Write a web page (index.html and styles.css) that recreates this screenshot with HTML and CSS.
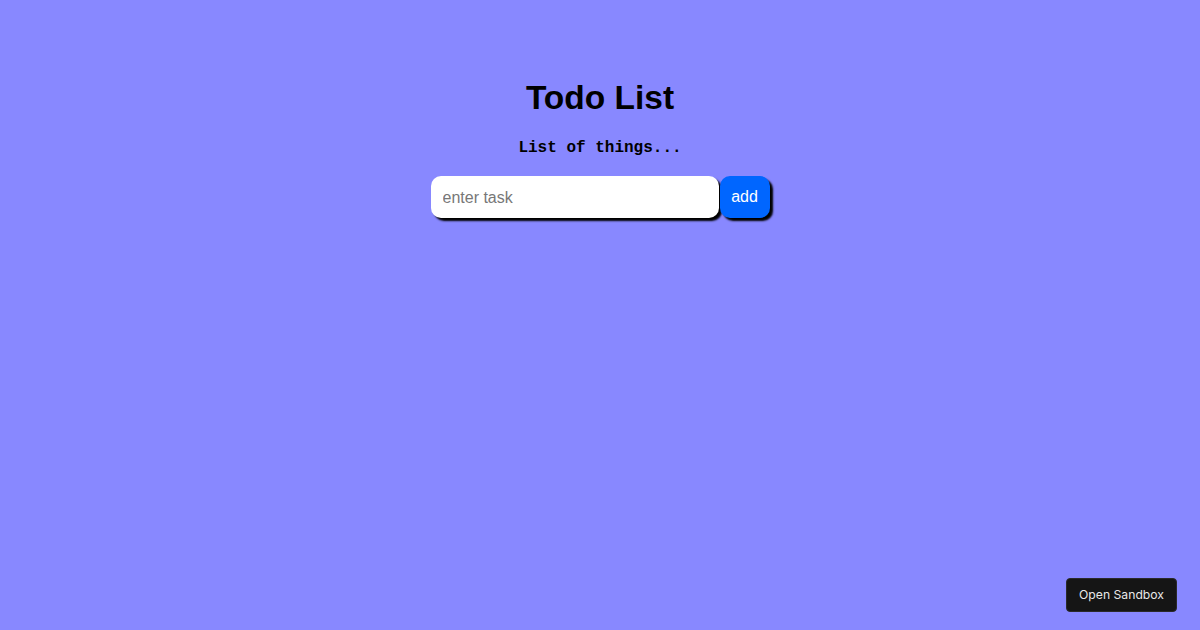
FILE: index.html
```html
<!DOCTYPE html>
<html lang="en">
<head>
  <meta charset="UTF-8">
  <meta name="viewport" content="width=device-width,initial-scale=1.0">
  <title>Todo List</title>
  <link rel="stylesheet" href="styles.css">
</head>
<body>
  <div class="app">
    <h1>Todo List</h1>
    <p class="subtitle">List of things...</p>
    <form class="todo-form">
      <input type="text" class="task-input" placeholder="enter task">
      <button type="submit" class="add-btn">add</button>
    </form>
    <ul class="todo-list"></ul>
  </div>

  <a class="sandbox-btn" href="#">Open Sandbox</a>
</body>
</html>
```

FILE: styles.css
```css
body { margin: 0; background: #8888ff; font-family: "Liberation Sans", Arial, sans-serif; min-height: 630px; }
.app { display: flex; flex-direction: column; align-items: center; padding-top: 77px; }
h1 { margin: 0; font-size: 33.5px; line-height: 42px; font-weight: bold; color: #000; }
.subtitle { margin: 19px 0 0; font-family: "Liberation Mono", "Courier New", monospace; font-weight: bold; font-size: 16px; line-height: 20px; }
.todo-form { display: flex; margin-top: 18px; }
.task-input {
  width: 288px; height: 42px; box-sizing: border-box; padding: 1px 12px 0;
  border: none; border-radius: 10px; background: #fff; outline: none;
  font-family: "Liberation Sans", Arial, sans-serif; font-size: 16px;
  box-shadow: 3px 3px 2px #000;
}
.task-input::placeholder { color: #777; }
.add-btn {
  width: 50px; height: 42px; margin-left: 1px; border: none; border-radius: 10px;
  background: #0066ff; color: #fff; font-family: "Liberation Sans", Arial, sans-serif; font-size: 16px;
  box-shadow: 3px 3px 2px #000; cursor: pointer;
}
.todo-list { list-style: none; padding: 0; margin: 0; }
.sandbox-btn {
  position: fixed; right: 23px; bottom: 18px; padding: 0 12px; height: 34px; line-height: 32px;
  background: #151515; color: #e8e8e8; border: 1px solid #2a2a2a; border-radius: 4px; box-sizing: border-box;
  font-family: Inter, "Noto Sans", sans-serif; font-size: 12.2px; text-decoration: none;
}
```
